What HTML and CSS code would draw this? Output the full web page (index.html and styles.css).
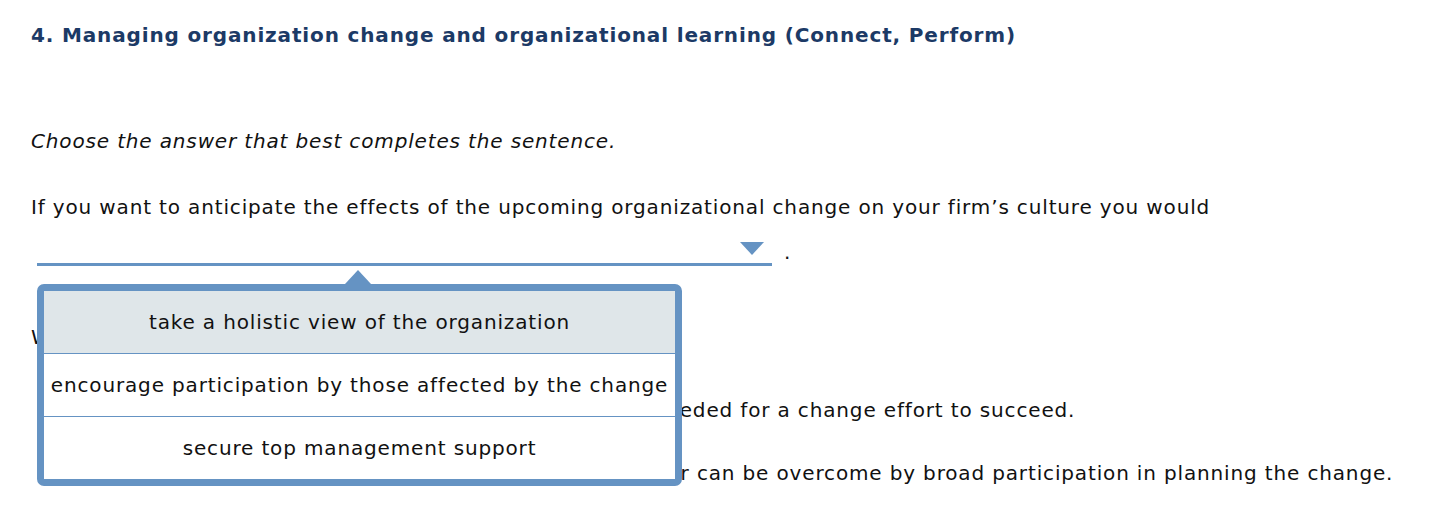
FILE: index.html
```html
<!DOCTYPE html>
<html lang="en">
<head>
    <meta charset="UTF-8">
    <title>Managing organization change</title>
    <link rel="stylesheet" href="styles.css">
</head>
<body>
    <div id="question">
        <h2 class="title">4. Managing organization change and organizational learning (Connect, Perform)</h2>

        <p class="instructions">Choose the answer that best completes the sentence.</p>

        <p class="prompt">If you want to anticipate the effects of the upcoming organizational change on your firm’s culture you would
            <span class="dropdown">
                <span class="caret"></span>
                <span class="menu">
                    <span class="option selected">take a holistic view of the organization</span>
                    <span class="option">encourage participation by those affected by the change</span>
                    <span class="option">secure top management support</span>
                </span>
            </span><span class="period">.</span>
        </p>

        <p class="prompt next">Which of the following is true?</p>
        <p class="statement">Strong visible support from top management team is needed for a change effort to succeed.</p>
        <p class="statement">Employee resistance to changes from uncertainty or fear can be overcome by broad participation in planning the change.</p>
    </div>
</body>
</html>
```

FILE: styles.css
```css
body {
    margin: 0;
    padding: 0;
    min-height: 506px;
    font-family: "DejaVu Sans", Verdana, sans-serif;
    letter-spacing: 0.85px;
    color: #111;
    background: #fff;
}
#question {
    padding: 22px 31px 40px 31px;
}
.title {
    margin: 0;
    font-size: 20px;
    line-height: 26px;
    font-weight: bold;
    color: #1c3a66;
}
.instructions {
    margin: 80px 0 0 0;
    font-size: 20px;
    line-height: 26px;
    font-style: italic;
}
.prompt {
    margin: 40px 0 0 0;
    font-size: 20px;
    line-height: 26px;
}
.dropdown {
    position: relative;
    display: inline-block;
    vertical-align: top;
    width: 735px;
    height: 30px;
    margin: 13px 0 0 6px;
    border-bottom: 3px solid #6593c3;
}
.caret {
    position: absolute;
    right: 8px;
    top: 9px;
    width: 0;
    height: 0;
    border-left: 12px solid transparent;
    border-right: 12px solid transparent;
    border-top: 13px solid #6593c3;
}
.period {
    display: inline-block;
    margin: 19px 0 0 12px;
    vertical-align: top;
}
.menu {
    position: absolute;
    left: 0;
    top: 51px;
    width: 631px;
    border: 7px solid #6593c3;
    border-radius: 7px;
    background: #fff;
    z-index: 2;
}
.menu::before {
    content: "";
    position: absolute;
    left: 301px;
    top: -21px;
    border-left: 13px solid transparent;
    border-right: 13px solid transparent;
    border-bottom: 14px solid #6593c3;
}
.option {
    display: block;
    height: 62px;
    line-height: 62px;
    text-align: center;
    border-top: 1px solid #6593c3;
    white-space: nowrap;
}
.option:first-child {
    border-top: none;
}
.option.selected {
    background: #dfe6e9;
}
.next {
    margin-top: 58px;
}
.statement {
    margin: 47px 0 0 0;
    padding-left: 40px;
    font-size: 20px;
    line-height: 26px;
}
.statement + .statement {
    margin-top: 37px;
}
```
